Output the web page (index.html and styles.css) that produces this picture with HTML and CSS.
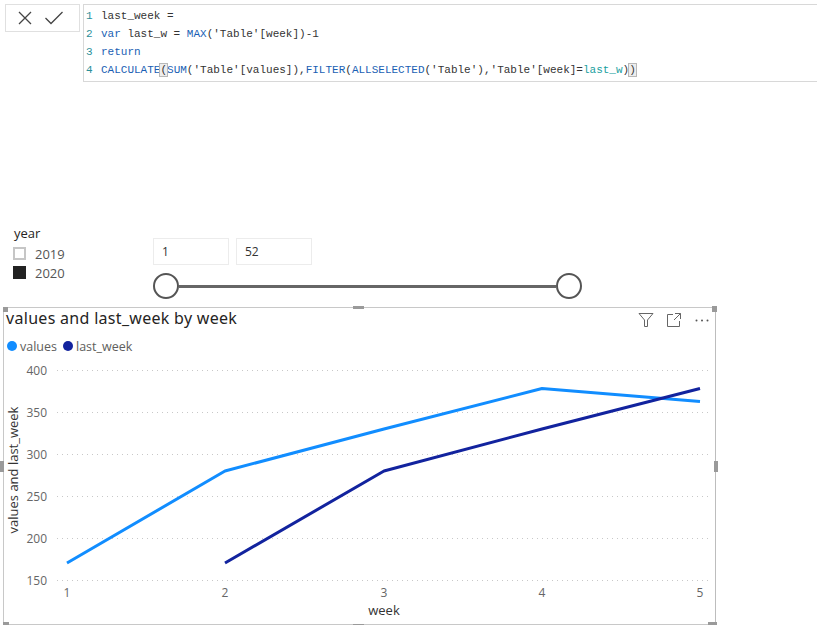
FILE: index.html
```html
<!DOCTYPE html>
<html>
<head>
<meta charset="utf-8">
<link rel="stylesheet" href="styles.css">
</head>
<body>
<div class="topbar">
  <div class="actions">
    <svg class="ico" width="16" height="16" viewBox="0 0 16 16"><path d="M2 2 L14 14 M14 2 L2 14" stroke="#444" stroke-width="1.3" fill="none"/></svg>
    <svg class="ico" width="20" height="16" viewBox="0 0 20 16"><path d="M1.5 8 L7 13.5 L18.5 2" stroke="#444" stroke-width="1.3" fill="none"/></svg>
  </div>
  <div class="formula">
    <div class="ln"><span class="num">1</span><span class="tx">last_week =</span></div>
    <div class="ln"><span class="num">2</span><span class="kw">var</span> last_w = <span class="kw">MAX</span>('Table'[week])-1</div>
    <div class="ln"><span class="num">3</span><span class="kw">return</span></div>
    <div class="ln"><span class="num">4</span><span class="kw">CALCULATE</span><span class="br">(</span><span class="kw">SUM</span>('Table'[values]),<span class="kw">FILTER</span>(<span class="kw">ALLSELECTED</span>('Table'),'Table'[week]=<span class="var">last_w</span>)<span class="br">)</span></div>
  </div>
</div>

<div class="slicers">
  <div class="year">
    <div class="ytitle">year</div>
    <div class="opt"><span class="cb"></span>2019</div>
    <div class="opt"><span class="cb on"></span>2020</div>
  </div>
  <div class="range">
    <div class="inputs">
      <div class="inp">1</div>
      <div class="inp">52</div>
    </div>
    <div class="slider">
      <span class="knob"></span>
      <span class="track"></span>
      <span class="knob"></span>
    </div>
  </div>
</div>

<div class="chart">
  <div class="head">
    <div class="title">values and last_week by week</div>
    <div class="tools">
      <svg width="16" height="16" viewBox="0 0 16 16"><path d="M1 1.5 H15 L9.5 8 V14.5 H6.5 V8 Z" stroke="#666" stroke-width="1" fill="none"/></svg>
      <svg width="16" height="16" viewBox="0 0 16 16"><path d="M7 2.5 H1.5 V14.5 H13.5 V9 M9 1.5 H14.5 V7 M14.5 1.5 L8 8" stroke="#666" stroke-width="1" fill="none"/></svg>
      <svg width="16" height="16" viewBox="0 0 16 16"><circle cx="2.5" cy="8.5" r="1" fill="#555"/><circle cx="8" cy="8.5" r="1" fill="#555"/><circle cx="13.5" cy="8.5" r="1" fill="#555"/></svg>
    </div>
  </div>
  <div class="legend">
    <span class="dot c1"></span><span class="lg">values</span>
    <span class="dot c2"></span><span class="lg">last_week</span>
  </div>
  <svg class="plot" width="711" height="261" viewBox="4 362 711 261">
    <g class="grid" stroke="#c8c8c8" stroke-width="1" stroke-dasharray="1 4">
      <line x1="57" y1="370.5" x2="710" y2="370.5"/>
      <line x1="57" y1="412.5" x2="710" y2="412.5"/>
      <line x1="57" y1="454.5" x2="710" y2="454.5"/>
      <line x1="57" y1="496.5" x2="710" y2="496.5"/>
      <line x1="57" y1="538.5" x2="710" y2="538.5"/>
      <line x1="57" y1="580.5" x2="710" y2="580.5"/>
    </g>
    <g class="ylab" font-size="12" fill="#666" text-anchor="end">
      <text x="47" y="374.5">400</text>
      <text x="47" y="416.5">350</text>
      <text x="47" y="458.5">300</text>
      <text x="47" y="500.5">250</text>
      <text x="47" y="542.5">200</text>
      <text x="47" y="584.5">150</text>
    </g>
    <g class="xlab" font-size="12" fill="#666" text-anchor="middle">
      <text x="67" y="597">1</text>
      <text x="225" y="597">2</text>
      <text x="384" y="597">3</text>
      <text x="542" y="597">4</text>
      <text x="700" y="597">5</text>
    </g>
    <text x="384" y="615" font-size="13" fill="#333" text-anchor="middle">week</text>
    <text x="0" y="0" font-size="13" fill="#333" text-anchor="middle" transform="translate(18 470) rotate(-90)">values and last_week</text>
    <polyline points="67,563 225,471 384,429 542,388.5 700,401.5" fill="none" stroke="#118DFF" stroke-width="3" stroke-linejoin="round"/>
    <polyline points="225,563 384,471 542,429 700,388.5" fill="none" stroke="#12239E" stroke-width="3" stroke-linejoin="round"/>
  </svg>
  <span class="h h-tl"></span>
  <span class="h h-tm"></span>
  <span class="h h-tr"></span>
  <span class="h h-ml"></span>
  <span class="h h-mr"></span>
  <span class="h h-bl"></span>
  <span class="h h-bm"></span>
  <span class="h h-br"></span>
</div>
</body>
</html>
```
FILE: styles.css
```css
* { box-sizing: border-box; }
body {
  margin: 0;
  width: 817px;
  height: 625px;
  overflow: hidden;
  background: #fff;
  font-family: "Open Sans", "Noto Sans", sans-serif;
  color: #252423;
}
.topbar {
  display: flex;
  margin-top: 4px;
  align-items: flex-start;
}
.actions {
  margin-left: 5px;
  width: 75px;
  height: 28px;
  border: 1px solid #e0e0e0;
  display: flex;
  align-items: center;
  padding-left: 11px;
  gap: 11px;
}
.ico { display: block; }
.formula {
  margin-left: 3px;
  flex: 1;
  height: 78px;
  border: 1px solid #d8d8d8;
  border-right: none;
  padding: 2px 0 0 2px;
  font-family: "Liberation Mono", "DejaVu Sans Mono", monospace;
  font-size: 11px;
  color: #333;
}
.ln {
  height: 18px;
  line-height: 18px;
  white-space: pre;
}
.num {
  display: inline-block;
  width: 15px;
  color: #2b8f9a;
}
.kw { color: #1a5fb4; }
.var { color: #19a0a0; }
.br {
  outline: 1px solid #b8b8b8;
  background: #ededed;
}
.slicers {
  display: flex;
  margin-top: 143px;
  height: 82px;
}
.year {
  margin-left: 13px;
  width: 140px;
}
.ytitle {
  font-size: 13px;
  line-height: 16px;
  height: 19px;
  padding-left: 1px;
  color: #252423;
}
.opt {
  display: flex;
  align-items: center;
  height: 19px;
  font-size: 13px;
  color: #555;
}
.cb {
  width: 13px;
  height: 13px;
  border: 2px solid #c6c6c6;
  margin-right: 9px;
}
.cb.on {
  background: #222;
  border-color: #222;
}
.range {
  margin-top: 13px;
}
.inputs {
  display: flex;
  gap: 7px;
}
.inp {
  width: 76px;
  height: 27px;
  border: 1px solid #ececec;
  font-size: 12px;
  line-height: 25px;
  padding-left: 8px;
  color: #333;
}
.slider {
  display: flex;
  align-items: center;
  margin-top: 8px;
}
.knob {
  width: 26px;
  height: 26px;
  border: 2px solid #555;
  border-radius: 50%;
  background: #fff;
  flex: none;
}
.track {
  width: 377px;
  height: 3px;
  background: #666;
}
.chart {
  position: relative;
  margin-left: 3px;
  width: 713px;
  height: 318px;
  border: 1px solid #c8c8c8;
  border-right-color: #bdbdbd;
}
.head {
  display: flex;
  justify-content: space-between;
  align-items: center;
  height: 20px;
}
.title {
  font-family: "Noto Sans", "Open Sans", sans-serif;
  font-size: 16px;
  letter-spacing: 0.3px;
  padding-left: 2px;
  color: #252423;
}
.tools {
  display: flex;
  gap: 12px;
  padding-right: 5px;
  padding-top: 4px;
}
.tools svg { display: block; }
.legend {
  display: flex;
  align-items: center;
  height: 34px;
  padding-left: 3px;
  padding-top: 2px;
  font-size: 12.5px;
  color: #605e5c;
}
.dot {
  width: 10px;
  height: 10px;
  border-radius: 50%;
  margin-right: 3px;
}
.c1 { background: #118DFF; }
.c2 { background: #12239E; }
.lg { margin-right: 6px; }
.plot {
  display: block;
  font-family: "Open Sans", "Noto Sans", sans-serif;
}
.h {
  position: absolute;
  background: #9a9a9a;
}
.h-tl { left: -1px; top: -1px; width: 5px; height: 5px; }
.h-tm { left: 349px; top: -2px; width: 11px; height: 3px; }
.h-tr { right: -2px; top: -2px; width: 5px; height: 6px; }
.h-ml { left: -4px; top: 153px; width: 4px; height: 11px; }
.h-mr { right: -3px; top: 153px; width: 4px; height: 11px; }
.h-bl { left: -1px; bottom: -1px; width: 6px; height: 3px; }
.h-bm { left: 349px; bottom: -3px; width: 11px; height: 3px; }
.h-br { right: -2px; bottom: -2px; width: 9px; height: 4px; }
```
